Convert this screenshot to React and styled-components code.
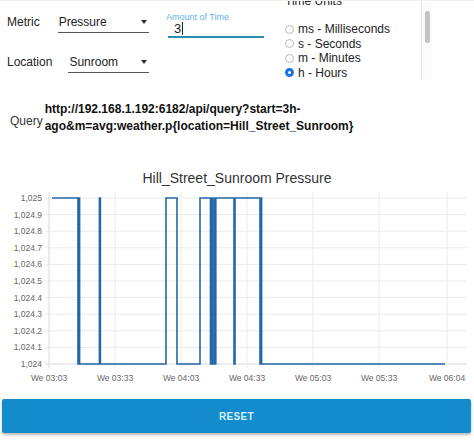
import { useEffect, useRef } from "react";
import styled, { createGlobalStyle } from "styled-components";

const GlobalStyle = createGlobalStyle`
  html, body {
    margin: 0;
    padding: 0;
    background: #ffffff;
  }
  body {
    font-family: "Liberation Sans", Arial, sans-serif;
    color: #222222;
  }
`;

const units = [
  ["ms", "Milliseconds"],
  ["s", "Seconds"],
  ["m", "Minutes"],
  ["h", "Hours"],
];

const yTicks = ["1,025", "1,024.9", "1,024.8", "1,024.7", "1,024.6", "1,024.5", "1,024.4", "1,024.3", "1,024.2", "1,024.1", "1,024"];
const xTicks = [
  [49, "We 03:03"],
  [115, "We 03:33"],
  [181, "We 04:03"],
  [247, "We 04:33"],
  [313, "We 05:03"],
  [379, "We 05:33"],
  [447, "We 06:04"],
];

const TOP = 11;
const BOTTOM = 177;
const H = TOP;
const L = BOTTOM;

// pressure steps, x in px along the time axis
const series = [
  [52, H], [78, H], [78, L], [79, L], [79, H], [79.6, H], [79.6, L],
  [99.4, L], [99.4, H], [100.4, H], [100.4, L],
  [166, L], [166, H], [177, H], [177, L],
  [200, L], [200, H], [210.5, H], [210.5, L], [211.5, L], [211.5, H], [212.3, H], [212.3, L],
  [214, L], [214, H], [214.8, H], [214.8, L], [215.8, L], [215.8, H],
  [234, H], [234, L], [235, L], [235, H],
  [260, H], [260, L], [261, L], [261, H], [261.6, H], [261.6, L],
  [445, L],
];

export default function App() {
  const unitsRef = useRef(null);

  useEffect(() => {
    if (unitsRef.current) unitsRef.current.scrollTop = 26;
  }, []);

  return (
    <Page>
      <GlobalStyle />
      <Controls>
        <Selectors>
          <Field>
            <FieldLabel $gap={18}>Metric</FieldLabel>
            <Select>
              <span>Pressure</span>
              <Arrow />
            </Select>
          </Field>
          <Field>
            <FieldLabel $gap={16}>Location</FieldLabel>
            <Select>
              <span>Sunroom</span>
              <Arrow />
            </Select>
          </Field>
        </Selectors>

        <TextField>
          <FloatLabel>Amount of Time</FloatLabel>
          <InputValue>
            3<Caret />
          </InputValue>
        </TextField>

        <UnitsPanel>
          <UnitsList ref={unitsRef}>
            <UnitsTitle>Time Units</UnitsTitle>
            {units.map(([key, name]) => (
              <UnitRow key={key}>
                <Radio $checked={key === "h"} />
                {key} - {name}
              </UnitRow>
            ))}
          </UnitsList>
          <ScrollTrack>
            <ScrollThumb />
          </ScrollTrack>
        </UnitsPanel>
      </Controls>

      <QueryRow>
        <QueryLabel>Query</QueryLabel>
        <QueryText>
          http://192.168.1.192:6182/api/query?start=3h-ago&amp;m=avg:weather.p&#123;location=Hill_Street_Sunroom&#125;
        </QueryText>
      </QueryRow>

      <ChartTitle>Hill_Street_Sunroom Pressure</ChartTitle>
      <Chart width="474" height="200" viewBox="0 0 474 200">
        {yTicks.map((t, i) => {
          const y = TOP + i * 16.6;
          return (
            <g key={t}>
              <line x1="45" x2="467" y1={y} y2={y} stroke={i === 10 ? "#d9d9d9" : "#ebebeb"} strokeWidth="1" />
              <TickText x="42" y={y + 3}>{t}</TickText>
            </g>
          );
        })}
        {xTicks.map(([x, t], i) => (
          <g key={t}>
            <line x1={x} x2={x} y1="5" y2="181" stroke={i === 0 ? "#d9d9d9" : "#ebebeb"} strokeWidth="1" />
            <TickText x={x} y="194" textAnchor="middle">{t}</TickText>
          </g>
        ))}
        <polyline
          points={series.map(([x, y]) => `${x},${y}`).join(" ")}
          fill="none"
          stroke="#2467a6"
          strokeWidth="1.6"
          strokeLinejoin="miter"
        />
      </Chart>

      <ResetButton>RESET</ResetButton>
    </Page>
  );
}

const Page = styled.div`
  width: 474px;
  height: 440px;
  border-top: 1px solid #efefef;
  box-sizing: border-box;
  overflow: hidden;
`;

const Controls = styled.div`
  display: flex;
  align-items: flex-start;
  height: 79px;
  padding-left: 7px;
`;

const Selectors = styled.div`
  display: flex;
  flex-direction: column;
  gap: 20px;
  width: 142px;
  padding-top: 11px;
`;

const Field = styled.div`
  display: flex;
  align-items: center;
  height: 20px;
`;

const FieldLabel = styled.span`
  font-size: 12px;
  color: #222;
  margin-right: ${(p) => p.$gap}px;
`;

const Select = styled.div`
  flex: 1;
  height: 20px;
  display: flex;
  align-items: center;
  justify-content: space-between;
  border-bottom: 1px solid #555;
  font-size: 12px;
  color: #222;
  padding: 0 2px 0 1px;
  box-sizing: border-box;
  margin-bottom: -1px;
`;

const Arrow = styled.span`
  width: 0;
  height: 0;
  border-left: 3px solid transparent;
  border-right: 3px solid transparent;
  border-top: 4px solid #333;
  margin-top: -1px;
`;

const TextField = styled.div`
  width: 96px;
  height: 35px;
  margin-left: 19px;
  border-bottom: 2px solid #2a8db3;
`;

const FloatLabel = styled.div`
  margin-top: 11px;
  margin-left: -2px;
  font-size: 9px;
  line-height: 10px;
  color: #5fb0ee;
`;

const InputValue = styled.div`
  display: flex;
  align-items: center;
  margin-left: 6px;
  font-size: 13px;
  line-height: 13px;
  color: #222;
`;

const Caret = styled.span`
  display: inline-block;
  width: 1px;
  height: 13px;
  margin-left: 1px;
  background: #222;
`;

const UnitsPanel = styled.div`
  display: flex;
  width: 149px;
  height: 80px;
  margin-left: 19px;
  margin-top: -1px;
`;

const UnitsList = styled.div`
  flex: 1;
  overflow: hidden;
  box-sizing: border-box;
  padding: 20px 0 40px 2px;
`;

const ScrollTrack = styled.div`
  width: 10px;
  background: #fbfbfb;
  border-left: 1px solid #e6e6e6;
  display: flex;
  justify-content: center;
`;

const ScrollThumb = styled.div`
  width: 5px;
  height: 32px;
  margin-top: 11px;
  border-radius: 3px;
  background: #c3c3c3;
`;

const UnitsTitle = styled.div`
  font-size: 12px;
  line-height: 14px;
  color: #222;
  margin-bottom: 14px;
`;

const UnitRow = styled.div`
  display: flex;
  align-items: center;
  height: 14.5px;
  font-size: 12px;
  color: #222;
`;

const Radio = styled.span`
  width: 9px;
  height: 9px;
  box-sizing: border-box;
  border-radius: 50%;
  margin-right: 4px;
  background: #fff;
  border: ${(p) => (p.$checked ? "3px solid #1a73e8" : "1px solid #b9b9b9")};
`;

const QueryRow = styled.div`
  display: flex;
  align-items: center;
  padding-left: 10px;
  margin-top: 21px;
`;

const QueryLabel = styled.span`
  font-size: 12px;
  color: #333;
  margin-top: 5px;
  margin-right: 2px;
`;

const QueryText = styled.div`
  width: 400px;
  font-size: 12px;
  font-weight: bold;
  line-height: 17px;
  color: #111;
`;

const ChartTitle = styled.div`
  margin-top: 34px;
  text-align: center;
  font-size: 14px;
  line-height: 18px;
  color: #333;
`;

const Chart = styled.svg`
  display: block;
`;

const TickText = styled.text.attrs((p) => ({ textAnchor: p.textAnchor || "end" }))`
  font-family: "Liberation Sans", Arial, sans-serif;
  font-size: 8.5px;
  fill: #666;
`;

const ResetButton = styled.button`
  display: block;
  width: 469px;
  height: 34px;
  margin: 12px 0 0 2px;
  border: none;
  border-radius: 2px;
  background: #148bcb;
  box-shadow: 0 2px 3px rgba(0, 0, 0, 0.28);
  color: #d3effc;
  font-family: "Liberation Sans", Arial, sans-serif;
  font-size: 10px;
  font-weight: bold;
  letter-spacing: 0.3px;
`;
